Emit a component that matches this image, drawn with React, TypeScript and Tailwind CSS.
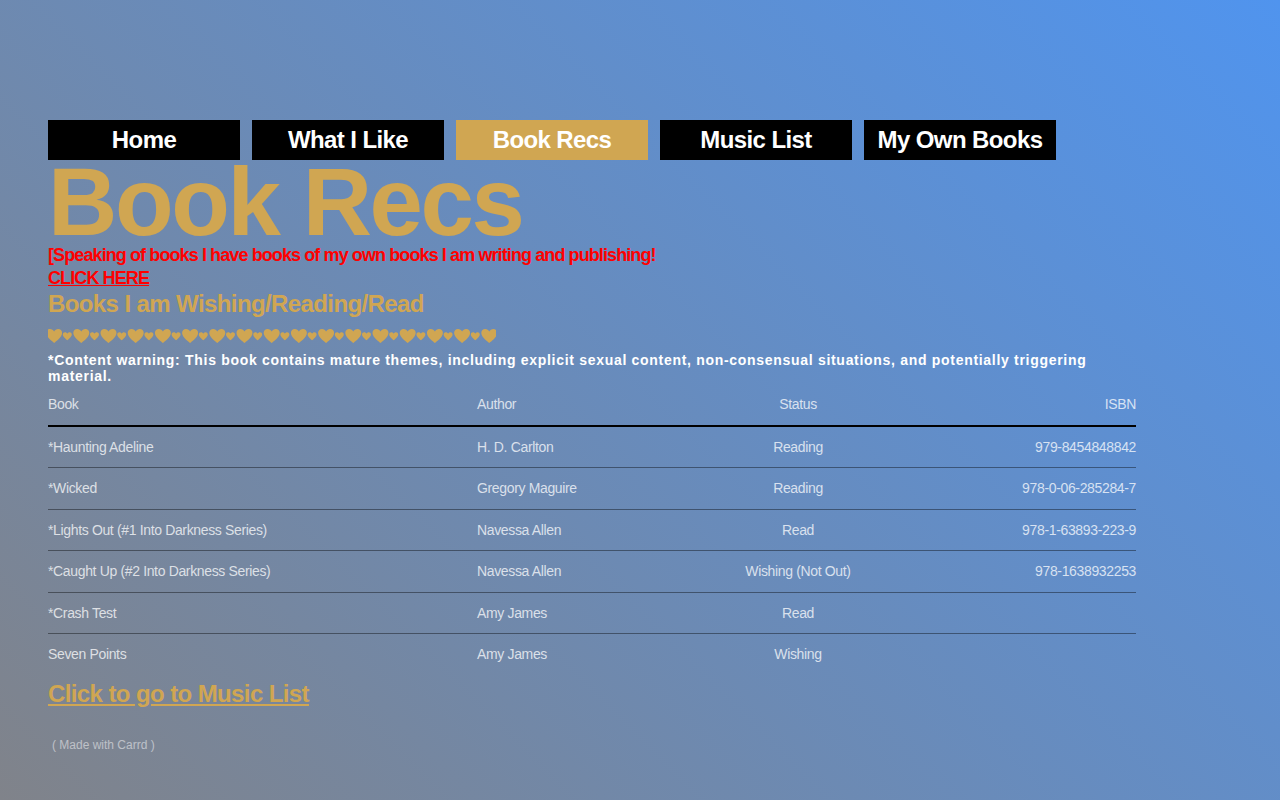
const links = [
  { name: "Home", href: "#home" },
  { name: "What I Like", href: "#likes" },
  { name: "Book Recs", href: "#books", active: true },
  { name: "Music List", href: "#music" },
  { name: "My Own Books", href: "#own" },
];

const books = [
  { title: "*Haunting Adeline", author: "H. D. Carlton", status: "Reading", isbn: "979-8454848842" },
  { title: "*Wicked", author: "Gregory Maguire", status: "Reading", isbn: "978-0-06-285284-7" },
  { title: "*Lights Out (#1 Into Darkness Series)", author: "Navessa Allen", status: "Read", isbn: "978-1-63893-223-9" },
  { title: "*Caught Up (#2 Into Darkness Series)", author: "Navessa Allen", status: "Wishing (Not Out)", isbn: "978-1638932253" },
  { title: "*Crash Test", author: "Amy James", status: "Read", isbn: "" },
  { title: "Seven Points", author: "Amy James", status: "Wishing", isbn: "" },
];

const heart =
  "M0 7 C-1.2 5.9 -8 1.2 -8 -3 C-8 -5.6 -6.2 -7 -4.1 -7 C-2.3 -7 -0.8 -6 0 -4.6 C0.8 -6 2.3 -7 4.1 -7 C6.2 -7 8 -5.6 8 -3 C8 1.2 1.2 5.9 0 7 Z";

function HeartDivider() {
  return (
    <svg className="mt-[9px] mb-2 block h-4 w-[448px] max-w-full" viewBox="0 0 448 16" fill="#d0a652" aria-hidden="true">
      {Array.from({ length: 17 }).map((_, i) => (
        <g key={i} transform={`translate(${6.1 + i * 27.2} 8)`}>
          <path d={heart} />
          <path d={heart} transform="translate(13.2 0.3) scale(0.56 0.58)" />
        </g>
      ))}
    </svg>
  );
}

export default function App() {
  return (
    <div className="min-h-screen bg-[linear-gradient(45deg,#80838a,#5094ee)] px-12 pt-[120px] pb-10 font-['Liberation_Sans',Arial,sans-serif]">
      <main className="max-w-[1088px]">
        {/* Nav */}
        <nav className="flex flex-wrap gap-3">
          {links.map((link) => (
            <a
              key={link.name}
              href={link.href}
              className={`flex h-10 w-48 items-center justify-center text-2xl leading-tight font-bold tracking-tight text-white ${
                link.active ? "bg-[#d0a652]" : "bg-black"
              }`}
            >
              {link.name}
            </a>
          ))}
        </nav>

        {/* Intro */}
        <h1 className="text-8xl leading-[84px] font-bold tracking-tight text-[#d0a652]">Book Recs</h1>
        <p className="text-lg leading-tight font-bold tracking-tighter text-[#ff0000]">
          [Speaking of books I have books of my own books I am writing and publishing!
          <br />
          <a href="#own" className="underline">
            CLICK HERE
          </a>
        </p>
        <h2 className="text-2xl leading-tight font-bold tracking-tight text-[#d0a652]">
          Books I am Wishing/Reading/Read
        </h2>
        <HeartDivider />
        <p className="text-sm leading-4 font-bold tracking-wider text-white">
          *Content warning: This book contains mature themes, including explicit sexual content, non-consensual
          situations, and potentially triggering material.
        </p>

        {/* Book list */}
        <table className="w-full table-fixed text-sm leading-tight tracking-tight text-white/75">
          <thead>
            <tr className="border-b-2 border-black">
              <th className="w-[429px] pt-3 pb-[11px] text-left font-normal">Book</th>
              <th className="w-[214px] pt-3 pb-[11px] text-left font-normal">Author</th>
              <th className="w-[214px] pt-3 pb-[11px] text-center font-normal">Status</th>
              <th className="pt-3 pb-[11px] text-right font-normal">ISBN</th>
            </tr>
          </thead>
          <tbody>
            {books.map((book) => (
              <tr key={book.title} className="border-b border-black/40 last:border-b-0">
                <td className="pt-3 pb-[11px]">{book.title}</td>
                <td className="pt-3 pb-[11px]">{book.author}</td>
                <td className="pt-3 pb-[11px] text-center">{book.status}</td>
                <td className="pt-3 pb-[11px] text-right">{book.isbn}</td>
              </tr>
            ))}
          </tbody>
        </table>

        <a
          href="#music"
          className="mt-1 inline-block text-2xl leading-tight font-bold tracking-tight text-[#d0a652] underline"
        >
          Click to go to Music List
        </a>
      </main>

      <footer className="mt-7 pl-1 text-xs text-white/50">
        <a href="#credits">( Made with Carrd )</a>
      </footer>
    </div>
  );
}
